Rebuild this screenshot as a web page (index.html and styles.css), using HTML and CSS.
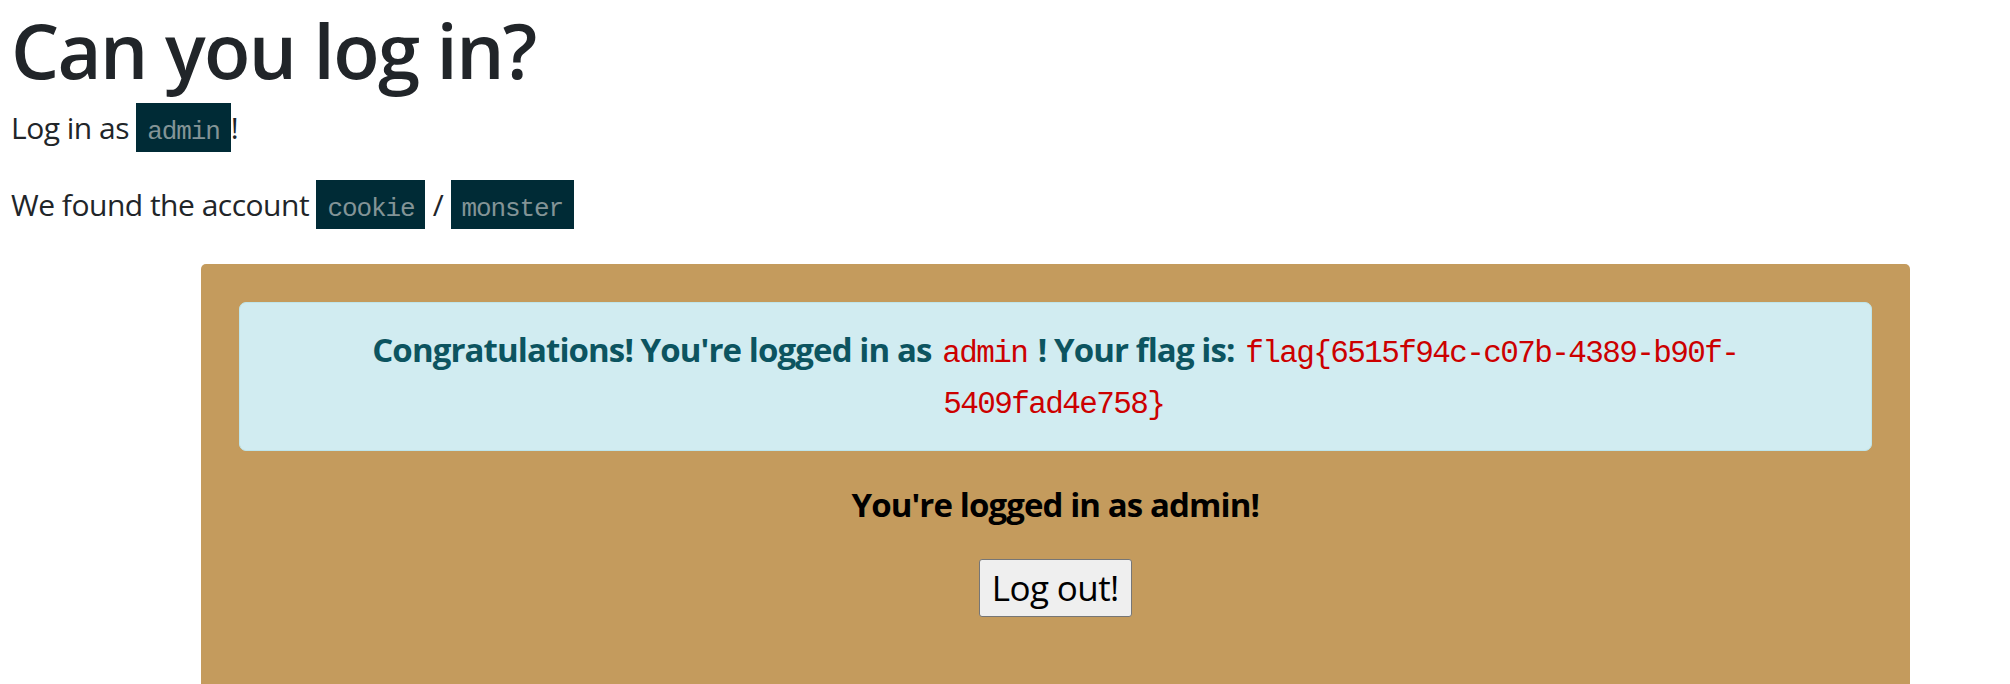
FILE: index.html
```html
<!doctype html>
<html lang="en">
<head>
  <meta charset="utf-8">
  <title>Can you log in?</title>
  <link rel="stylesheet" href="styles.css">
</head>
<body>

<div class="intro">
  <h1>Can you log in?</h1>
  <p>Log in as <code>admin</code>!</p>
  <p>We found the account <code>cookie</code> / <code>monster</code></p>
</div>

<div class="panel">
  <div class="alert">
    Congratulations! You're logged in as <code class="hl">admin</code> ! Your flag is: <code class="hl">flag{6515f94c-c07b-4389-b90f-5409fad4e758}</code>
  </div>
  <h5 class="status">You're logged in as admin!</h5>
  <form class="logout">
    <button type="button" class="btn">Log out!</button>
  </form>
</div>

</body>
</html>
```

FILE: styles.css
```css
html {
  height: 100%;
}

body {
  margin: 0;
  padding: 0;
  background: #ffffff;
  color: #212529;
  font-family: "Open Sans", sans-serif;
  font-size: 30px;
  line-height: 1.5;
  letter-spacing: -0.5px;
}

.intro {
  padding: 4px 11px 0;
}

h1 {
  margin: 0 0 10px;
  font-size: 76px;
  font-weight: 600;
  line-height: 1.2;
  letter-spacing: -1.6px;
}

p {
  margin: 0 0 30px;
}

code {
  font-family: "Liberation Mono", monospace;
  font-size: 26px;
  letter-spacing: -1.1px;
  background: #002b36;
  color: #839496;
  padding: 14px 11px 5px;
}

.panel {
  margin-top: 35px;
  margin-left: 10%;
  width: 85%;
  box-sizing: border-box;
  min-height: 500px;
  padding: 38px;
  background-color: #c49b5d;
  border-radius: 5px;
  text-align: center;
}

.alert {
  background-color: #d1ecf1;
  border: 1px solid #bee5eb;
  border-radius: 7px;
  color: #0c5460;
  padding: 23px 38px 22px;
  margin-bottom: 34px;
  font-size: 33px;
  font-weight: 700;
  line-height: 47px;
  letter-spacing: -0.9px;
}

.alert code.hl {
  background: none;
  color: #cc0000;
  font-weight: 400;
  font-size: 31px;
  letter-spacing: -1.6px;
  padding: 0 3px;
}

.status {
  margin: 0 0 34px;
  font-size: 33px;
  font-weight: 700;
  line-height: 1.2;
  letter-spacing: -0.9px;
  color: #000000;
}

.logout {
  margin: 0;
}

.btn {
  font-family: "Open Sans", sans-serif;
  font-size: 35px;
  letter-spacing: -0.6px;
  height: 58px;
  padding: 0 12px;
  color: #000000;
  background-color: #efefef;
  border: 1px solid #767676;
  border-radius: 3px;
}
```
